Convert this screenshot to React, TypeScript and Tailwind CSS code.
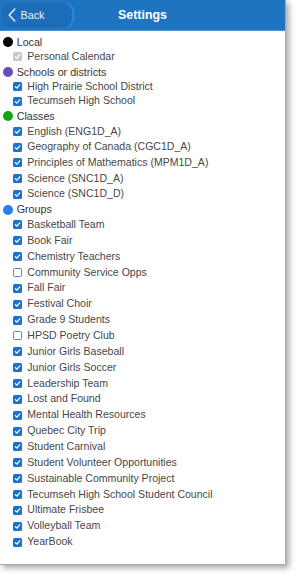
import React from 'react'

type Item = { label: string; checked: boolean; disabled?: boolean }
type Section = { title: string; dot: string; rowH: string; items: Item[] }

const sections: Section[] = [
  {
    title: 'Local',
    dot: 'bg-black',
    rowH: 'h-[14.7px]',
    items: [{ label: 'Personal Calendar', checked: true, disabled: true }],
  },
  {
    title: 'Schools or districts',
    dot: 'bg-[#6a4cb6]',
    rowH: 'h-[14.7px]',
    items: [
      { label: 'High Prairie School District', checked: true },
      { label: 'Tecumseh High School', checked: true },
    ],
  },
  {
    title: 'Classes',
    dot: 'bg-[#18a018]',
    rowH: 'h-[15.7px]',
    items: [
      { label: 'English (ENG1D_A)', checked: true },
      { label: 'Geography of Canada (CGC1D_A)', checked: true },
      { label: 'Principles of Mathematics (MPM1D_A)', checked: true },
      { label: 'Science (SNC1D_A)', checked: true },
      { label: 'Science (SNC1D_D)', checked: true },
    ],
  },
  {
    title: 'Groups',
    dot: 'bg-[#2a7ff0]',
    rowH: 'h-[15.87px]',
    items: [
      { label: 'Basketball Team', checked: true },
      { label: 'Book Fair', checked: true },
      { label: 'Chemistry Teachers', checked: true },
      { label: 'Community Service Opps', checked: false },
      { label: 'Fall Fair', checked: true },
      { label: 'Festival Choir', checked: true },
      { label: 'Grade 9 Students', checked: true },
      { label: 'HPSD Poetry Club', checked: false },
      { label: 'Junior Girls Baseball', checked: true },
      { label: 'Junior Girls Soccer', checked: true },
      { label: 'Leadership Team', checked: true },
      { label: 'Lost and Found', checked: true },
      { label: 'Mental Health Resources', checked: true },
      { label: 'Quebec City Trip', checked: true },
      { label: 'Student Carnival', checked: true },
      { label: 'Student Volunteer Opportunities', checked: true },
      { label: 'Sustainable Community Project', checked: true },
      { label: 'Tecumseh High School Student Council', checked: true },
      { label: 'Ultimate Frisbee', checked: true },
      { label: 'Volleyball Team', checked: true },
      { label: 'YearBook', checked: true },
    ],
  },
]

function Box({ checked, disabled }: { checked: boolean; disabled?: boolean }) {
  if (!checked) {
    return <span className="w-[9px] h-[9px] rounded-[1.5px] border border-[#5b84bd] bg-white" />
  }
  return (
    <span
      className={`w-[9px] h-[9px] rounded-[1.5px] flex items-center justify-center ${
        disabled ? 'bg-[#c9c9c9]' : 'bg-[#1e72cf]'
      }`}
    >
      <svg width="7" height="7" viewBox="0 0 10 10">
        <path d="M2 5.3 L4.2 7.4 L8.2 2.6" fill="none" stroke="white" strokeWidth="1.7" strokeLinecap="round" strokeLinejoin="round" />
      </svg>
    </span>
  )
}

export default function App() {
  return (
    <div className="w-[297px] h-[576px] bg-white font-['Liberation_Sans',Arial,sans-serif]">
      <div className="w-[286px] h-[565px] bg-white border-r border-b border-[#a8a8a8] shadow-[3px_3px_6px_rgba(0,0,0,0.35)] overflow-hidden">
        {/* Header */}
        <div className="relative h-[31px] bg-[#1f74c0] border-b border-[#4b93d3] flex items-center">
          <div className="ml-[2px] h-[25px] w-[70px] rounded-[9px] bg-[#1c6cb8] shadow-[2px_0_2px_#2a89ea] flex items-center">
            <svg width="8" height="14" viewBox="0 0 8 14" className="ml-[5.5px]">
              <path d="M6.8 1 L1.2 7 L6.8 13" fill="none" stroke="#e8f1fb" strokeWidth="1.4" strokeLinecap="round" strokeLinejoin="round" />
            </svg>
            <span className="ml-[5px] text-[10.8px] text-[#e8f1fb]">Back</span>
          </div>
          <span className="absolute left-0 right-0 text-center text-[12.4px] font-bold text-white pointer-events-none">
            Settings
          </span>
        </div>

        {/* List */}
        <div className="pt-[3.5px]">
          {sections.map((s) => (
            <div key={s.title}>
              <div className="h-[15px] flex items-center">
                <span className={`ml-[2.7px] w-[10px] h-[10px] rounded-full ${s.dot}`} />
                <span className="ml-[4px] text-[10.7px] text-[#353535]">{s.title}</span>
              </div>
              {s.items.map((it) => (
                <div key={it.label} className={`${s.rowH} flex items-center`}>
                  <span className="ml-[13px] flex">
                    <Box checked={it.checked} disabled={it.disabled} />
                  </span>
                  <span className="ml-[5.3px] text-[10.55px] text-[#474747] whitespace-nowrap">{it.label}</span>
                </div>
              ))}
            </div>
          ))}
        </div>
      </div>
    </div>
  )
}
